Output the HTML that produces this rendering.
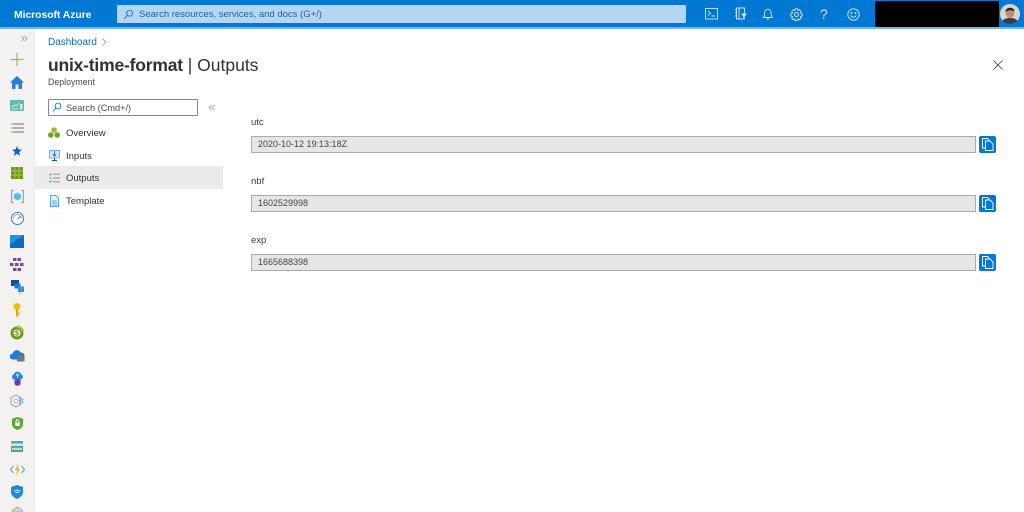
<!DOCTYPE html>
<html>
<head>
<meta charset="utf-8">
<style>
html,body{margin:0;padding:0;width:1024px;height:512px;overflow:hidden;background:#fff;font-family:"Liberation Sans",sans-serif;color:#323130}
#w{position:absolute;left:0;top:0;width:1024px;height:512px;overflow:hidden;filter:blur(.3px)}
.a{position:absolute}
.t{position:absolute;white-space:nowrap}
svg{position:absolute;overflow:visible}
.field{position:absolute;left:251px;width:723px;height:15px;background:#e6e6e6;border:1px solid #ababab;border-width:1.5px 1px 1.5px 1px}
.field span{position:absolute;left:6px;top:0;font-size:9px;line-height:15px;color:#444}
.lbl{position:absolute;left:251px;font-size:9.5px;color:#3b3a39}
.copy{position:absolute;left:979px;width:17px;height:17px;background:#0078d4;border-radius:2px}
.nav{position:absolute;left:66px;font-size:9.5px;color:#323130;line-height:12px}
</style>
</head>
<body>
<div id="w">
<div class="a" style="left:0;top:0;width:1024px;height:27px;background:#0078d4"></div>
<div class="a" style="left:0;top:27px;width:1024px;height:2px;background:#7cb8e6"></div>
<div class="t" style="left:14px;top:9px;font-size:10.4px;line-height:13px;color:#fff;font-weight:bold;letter-spacing:-.05px">Microsoft Azure</div>
<div class="a" style="left:117px;top:5px;width:569px;height:18px;background:#b3d6f2;border-radius:1px"></div>
<svg style="left:123px;top:9px" width="11" height="11" viewBox="0 0 11 11" fill="none" stroke="#2b6ea6" stroke-width=".9"><circle cx="6.6" cy="4.2" r="3"/><path d="M4.4 6.4L1.2 9.8"/></svg>
<div class="t" style="left:139px;top:9px;font-size:9.5px;line-height:12px;color:#2a5f8f">Search resources, services, and docs (G+/)</div>

<svg style="left:705px;top:8px" width="14" height="12" viewBox="0 0 14 12" fill="none" stroke="#d5e8f7" stroke-width=".9"><rect x=".5" y=".5" width="12" height="10.5"/><path d="M3 3l2.5 2.3L3 7.6M6.5 8h3.5"/></svg>
<svg style="left:734px;top:7px" width="14" height="14" viewBox="0 0 14 14" fill="none" stroke="#d5e8f7" stroke-width=".9"><path d="M2.5 1h8v5M9 12H2.500V1M1 3h2M1 6h2M1 9h2M5 1v11"/><path d="M7 6.500h6l-2.300 3v3h-1.400v-3z" fill="#d5e8f7" stroke="none"/></svg>
<svg style="left:762px;top:8px" width="12" height="13" viewBox="0 0 12 13" fill="none" stroke="#e2effa" stroke-width=".9"><path d="M1.500 9.500c1-1 1-2 1-4.300C2.500 3 4 1.200 5.800 1.200S9.200 3 9.200 5.200c0 2.300 0 3.300 1 4.300zM4.800 11h2.200"/></svg>
<svg style="left:790px;top:8px" width="13" height="13" viewBox="0 0 13 13" fill="none" stroke="#d5e8f7" stroke-width=".9"><circle cx="6.500" cy="6.500" r="2"/><path d="M5.300.8h2.400l.4 1.700 1.500-.7 1.600 1.700-.8 1.500 1.700.6v2.300l-1.700.6.800 1.500-1.600 1.700-1.500-.8-.4 1.700H5.300l-.5-1.700-1.500.8-1.600-1.700.8-1.500L.8 7.900V5.600l1.700-.6-.8-1.500 1.600-1.700 1.500.7z"/></svg>
<div class="t" style="left:820px;top:6px;font-size:14px;line-height:16px;color:#d5e8f7">?</div>
<svg style="left:847px;top:8px" width="13" height="13" viewBox="0 0 13 13" fill="none" stroke="#e2effa" stroke-width=".9"><circle cx="6.500" cy="6.500" r="5.700"/><path d="M3.700 7.500c1.300 2.200 4.300 2.200 5.600 0"/><circle cx="4.500" cy="5" r=".5" fill="#e2effa"/><circle cx="8.500" cy="5" r=".5" fill="#e2effa"/></svg>
<div class="a" style="left:875px;top:1px;width:124px;height:26px;background:#000"></div>
<svg style="left:1000px;top:4px" width="20" height="20" viewBox="0 0 20 20"><defs><clipPath id="c"><circle cx="10" cy="10" r="10"/></clipPath></defs><g clip-path="url(#c)"><rect width="20" height="20" fill="#d8d6d2"/><path d="M1 20c1-5 5-6 9-6s8 1 9 6z" fill="#3f3d3c"/><ellipse cx="10" cy="9" rx="4.300" ry="5" fill="#b98d78"/><path d="M5.500 8c-.5-5 8.500-6 9-.5-2-1.500-6.500-2-9 .5z" fill="#2a2320"/></g></svg>

<div class="a" style="left:0;top:29px;width:34px;height:483px;background:#f3f2f1;box-shadow:1px 0 2px rgba(0,0,0,.08)"></div>
<svg style="left:21px;top:35px" width="7" height="7" viewBox="0 0 7 7" fill="none" stroke="#8a8886" stroke-width=".7"><path d="M.5 1l2.500 2.500L.5 6M3.500 1L6 3.500 3.500 6"/></svg>
<svg style="left:10px;top:53px" width="14" height="14" fill="none" stroke="#8cc152" stroke-width="1.200"><path d="M7 0v13M.5 6.500h13"/></svg>
<svg style="left:10px;top:76px" width="14" height="13" viewBox="0 0 14 13"><path d="M7 0L0 6.500h2V13h3.500V8.500h3V13H12V6.500h2z" fill="#2a7dd6"/></svg>
<svg style="left:10px;top:100px" width="14" height="11" viewBox="0 0 14 11"><rect width="14" height="11" rx="1" fill="#68b9ad"/><path d="M1.500 7l3-2 2 1 2.500-3" stroke="#e4f3f0" fill="none" stroke-width=".8"/><path d="M1.500 9h7" stroke="#e4f3f0" stroke-width=".8"/><rect x="10" y="4" width="2.500" height="5.500" fill="#d5ecea"/></svg>
<svg style="left:11px;top:123px" width="13" height="10" viewBox="0 0 13 10"><path d="M2 1h11M2 5h11M2 9h11" stroke="#8a8886" stroke-width="1.200"/><path d="M0 1h1.500M0 5h1.500M0 9h1.500" stroke="#7fba00" stroke-width="1.200"/></svg>
<svg style="left:12px;top:146px" width="10" height="10" viewBox="0 0 10 10"><path d="M5 0l1.300 3.300L10 3.700 7.200 6l.9 3.800L5 7.800 1.900 9.800 2.800 6 0 3.700l3.700-.4z" fill="#0f66c2"/></svg>
<svg style="left:11px;top:167px" width="12" height="12" viewBox="0 0 12 12"><rect width="12" height="12" fill="#6a9c14"/><path d="M4 0v12M8 0v12M0 4h12M0 8h12" stroke="#b8d46d" stroke-width=".7"/></svg>
<svg style="left:11px;top:190px" width="13" height="13" viewBox="0 0 13 13"><path d="M2.500.5H.7v12h1.800M10.500.5h1.800v12h-1.800" fill="none" stroke="#8a8886" stroke-width=".9"/><path d="M6.500 2.500l3.500 2v4l-3.500 2-3.500-2v-4z" fill="#50c0ee"/></svg>
<svg style="left:11px;top:212px" width="13" height="13" viewBox="0 0 13 13"><circle cx="6.500" cy="6.500" r="6" fill="#fff" stroke="#2b8ad8" stroke-width="1.100"/><path d="M2.500 6.500a4 4 0 0 1 8 0" fill="none" stroke="#6bb9ec"/><path d="M6.500 7L9.500 4.500" stroke="#d13438" stroke-width=".9"/></svg>
<svg style="left:10px;top:235px" width="14" height="13" viewBox="0 0 14 13"><rect width="14" height="13" fill="#1f93e2"/><path d="M0 13V9l4-2 3-3 3-1 4-3v13z" fill="#0a6bc0"/></svg>
<svg style="left:10px;top:258px" width="14" height="13" viewBox="0 0 14 13" fill="#7a45a8"><rect x="3" y="0" width="3.500" height="3"/><rect x="7.500" y="0" width="3.500" height="3"/><rect x="0" y="5" width="3.500" height="3"/><rect x="5" y="5" width="3.500" height="3"/><rect x="10" y="5" width="3.500" height="3"/><rect x="3" y="10" width="3.500" height="3"/><rect x="7.500" y="10" width="3.500" height="3"/></svg>
<svg style="left:11px;top:280px" width="13" height="14" viewBox="0 0 13 14"><rect x="0" y="0" width="8" height="6" fill="#0f4f9e"/><rect x="3.500" y="3.500" width="6" height="5" fill="#1e78cf"/><rect x="7" y="6.500" width="6" height="5.500" fill="#2f93e0"/><path d="M9 12.500v1.500" stroke="#8a8886"/></svg>
<svg style="left:13px;top:303px" width="8" height="14" viewBox="0 0 8 14"><circle cx="4" cy="3.500" r="3.500" fill="#f5b916"/><path d="M3 6h2v7.500H3z" fill="#f0a30a"/><path d="M5 9.500h1.300M5 11.500h1.300" stroke="#f0a30a"/></svg>
<svg style="left:10px;top:326px" width="14" height="14" viewBox="0 0 14 14"><circle cx="7" cy="7" r="5" fill="#fff" stroke="#6a9c14" stroke-width="3"/><path d="M7 .5A6.500 6.500 0 0 1 13 5" fill="none" stroke="#b3c93a" stroke-width="2.500"/><text x="7" y="9.500" font-family="Liberation Sans" font-size="7" font-weight="bold" text-anchor="middle" fill="#7a6a20">$</text></svg>
<svg style="left:10px;top:349px" width="15" height="13" viewBox="0 0 15 13"><path d="M3 10.500A3 3 0 0 1 2.700 4.500 4.200 4.200 0 0 1 10.500 3.500a3.300 3.300 0 0 1 1 7z" fill="#1a7fd4"/><rect x="7" y="6.500" width="7.500" height="6" fill="#777"/></svg>
<svg style="left:11px;top:372px" width="13" height="14" viewBox="0 0 13 14"><path d="M3 7.500A2.800 2.800 0 0 1 2.800 2.300 3.800 3.800 0 0 1 10 2.300a2.800 2.800 0 0 1 0 5.200z" fill="#1a8ae0"/><path d="M3.500 8l3 -1 3 1v4.500l-3 1.500-3-1.500z" fill="#7a35b5"/><path d="M6.500 2v4M5 3.500l1.500-1.500L8 3.500" stroke="#fff" fill="none" stroke-width=".8"/></svg>
<svg style="left:10px;top:394px" width="14" height="14" viewBox="0 0 14 14"><path d="M6 1l5 2.800v6.400L6 13l-5-2.800V3.800z" fill="#f3f2f1" stroke="#a19f9d"/><circle cx="6" cy="7" r="2" fill="#fff" stroke="#a19f9d" stroke-width=".8"/><g fill="#40a8e6"><circle cx="10" cy="4.500" r="1"/><circle cx="10" cy="7" r="1"/><circle cx="10" cy="9.500" r="1"/><circle cx="12.800" cy="5.700" r=".8"/><circle cx="12.800" cy="8.300" r=".8"/></g></svg>
<svg style="left:12px;top:417px" width="11" height="13" viewBox="0 0 11 13"><path d="M5.500 0L11 1.800V7c0 3-2.500 5-5.500 6C2.500 12 0 10 0 7V1.800z" fill="#5ea72e"/><rect x="3.300" y="5.500" width="4.400" height="3.500" fill="#fff"/><path d="M4 5.500V4.200a1.500 1.500 0 0 1 3 0v1.300" fill="none" stroke="#fff" stroke-width=".8"/></svg>
<svg style="left:11px;top:441px" width="12" height="11" viewBox="0 0 12 11"><rect width="12" height="2.500" fill="#36b6a8"/><rect y="3" width="12" height="2" fill="#cfe6e2"/><rect y="5" width="12" height="6" fill="#5d9c94"/><rect x="1" y="6.800" width="10" height="2.200" fill="#bcdad5"/></svg>
<svg style="left:10px;top:463px" width="15" height="13" viewBox="0 0 15 13"><path d="M3.500 3L.5 6.500l3 3.500M11.500 3l3 3.500-3 3.500" fill="none" stroke="#49a9ee" stroke-width="1.100"/><path d="M8.500 0L4.800 7h2.400L5.800 13l4.400-7.500H7.700z" fill="#f5b916"/></svg>
<svg style="left:11px;top:485px" width="12" height="14" viewBox="0 0 12 14"><path d="M6 0l6 2v5c0 3.200-2.800 5.500-6 7-3.200-1.500-6-3.800-6-7V2z" fill="#1a8ae0"/><path d="M3 6.500a4 4 0 0 1 6 0M4.500 8a2 2 0 0 1 3 0" fill="none" stroke="#fff" stroke-width=".9"/></svg>
<svg style="left:11px;top:507px" width="13" height="5" viewBox="0 0 13 5"><path d="M6.500 0l5 3v2h-10V3z" fill="#cfd8dc" stroke="#8a8886" stroke-width=".6"/></svg>

<div class="t" style="left:48px;top:37px;font-size:10px;line-height:12px;color:#0f6cbd">Dashboard</div>
<svg style="left:102px;top:38px" width="5" height="8" fill="none" stroke="#8a8886" stroke-width=".7"><path d="M.5.500L4 4 .5 7.500"/></svg>
<div class="t" style="left:48px;top:55px;font-size:17.500px;line-height:20px;color:#323130"><span style="font-weight:bold;letter-spacing:-.2px">unix-time-format</span> | Outputs</div>
<div class="t" style="left:48px;top:77px;font-size:8.800px;line-height:11px;color:#4a4948">Deployment</div>
<svg style="left:993px;top:60px" width="10" height="10" fill="none" stroke="#323130" stroke-width=".8"><path d="M.5.500l9 9M9.500.500l-9 9"/></svg>

<div class="a" style="left:48px;top:99px;width:148px;height:15px;border:1px solid #8a8886;border-radius:1px"></div>
<svg style="left:52px;top:102px" width="10" height="10" viewBox="0 0 10 10" fill="none" stroke="#0078d4" stroke-width=".9"><circle cx="6" cy="4" r="2.900"/><path d="M3.900 6.100L1 9.300"/></svg>
<div class="t" style="left:66px;top:102px;font-size:9.200px;line-height:12px;color:#4a4948">Search (Cmd+/)</div>
<svg style="left:208px;top:104px" width="7" height="7" viewBox="0 0 7 7" fill="none" stroke="#8a8886" stroke-width=".7"><path d="M3.500 1L1 3.500 3.500 6M6.500 1L4 3.500 6.500 6"/></svg>

<div class="a" style="left:34px;top:166px;width:189px;height:23px;background:#edebe9"></div>
<svg style="left:48px;top:127px" width="12" height="11" viewBox="0 0 12 11" fill="#6fa51f"><circle cx="6" cy="3" r="2.800" fill="#8cbf2f"/><circle cx="2.800" cy="8" r="2.800"/><circle cx="9.200" cy="8" r="2.800"/></svg>
<div class="nav" style="top:128px">Overview</div>
<svg style="left:49px;top:150px" width="11" height="11" viewBox="0 0 11 11"><rect x=".4" y=".4" width="10.200" height="7.500" fill="#d5e9f8" stroke="#5ea0d8" stroke-width=".8"/><path d="M5.500 1v5M3.800 4.300l1.700 1.800 1.700-1.800" fill="none" stroke="#0f6cbd" stroke-width=".9"/><path d="M3 10.500h5M5.500 8v2.500" stroke="#0f4f9e"/></svg>
<div class="nav" style="top:151px">Inputs</div>
<svg style="left:49px;top:173px" width="11" height="10" viewBox="0 0 11 10"><path d="M4 1.200h7M4 5h7M4 8.800h7" stroke="#8a8886" stroke-width=".9"/><path d="M.3 1.200l1 1L2.800.300M.3 5h2.500M.3 8l1 1 1.500-1.500" fill="none" stroke="#2a8ad8" stroke-width=".8"/></svg>
<div class="nav" style="top:173px">Outputs</div>
<svg style="left:50px;top:195px" width="9" height="12" viewBox="0 0 9 12"><path d="M.4.400h5.400L8.600 3v8.600H.4z" fill="#e4f0fa" stroke="#3a8fd8" stroke-width=".8"/><path d="M2 6h5M2 8h5M2 10h5" stroke="#3a8fd8" stroke-width=".8"/></svg>
<div class="nav" style="top:196px">Template</div>

<div class="lbl" style="top:117px">utc</div>
<div class="field" style="top:136px"><span>2020-10-12 19:13:18Z</span></div>
<div class="copy" style="top:136px"><svg style="left:3px;top:2px" width="12" height="13" viewBox="0 0 12 13" fill="none" stroke="#fff" stroke-width=".9"><path d="M.5.500h5l1.500 1.500v8H.5z"/><path d="M3.500 3h4.500l3 3v6.500H3.500z" fill="#0078d4"/></svg></div>
<div class="lbl" style="top:176px">nbf</div>
<div class="field" style="top:195px"><span>1602529998</span></div>
<div class="copy" style="top:195px"><svg style="left:3px;top:2px" width="12" height="13" viewBox="0 0 12 13" fill="none" stroke="#fff" stroke-width=".9"><path d="M.5.500h5l1.500 1.500v8H.5z"/><path d="M3.500 3h4.500l3 3v6.500H3.500z" fill="#0078d4"/></svg></div>
<div class="lbl" style="top:235px">exp</div>
<div class="field" style="top:254px"><span>1665688398</span></div>
<div class="copy" style="top:254px"><svg style="left:3px;top:2px" width="12" height="13" viewBox="0 0 12 13" fill="none" stroke="#fff" stroke-width=".9"><path d="M.5.500h5l1.500 1.500v8H.5z"/><path d="M3.500 3h4.500l3 3v6.500H3.500z" fill="#0078d4"/></svg></div>
</div>
</body>
</html>
